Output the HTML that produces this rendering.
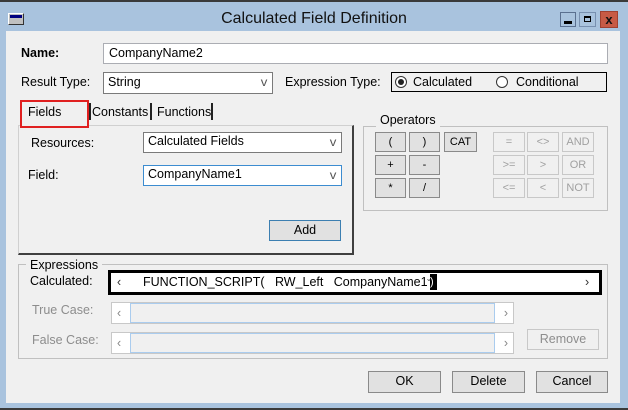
<!DOCTYPE html><html><head><style>
*{box-sizing:border-box;margin:0;padding:0}
body{width:628px;height:410px;background:#a9c3de;font-family:"Liberation Sans",sans-serif;font-size:12.5px;color:#000;position:relative;overflow:hidden}
.a{position:absolute}
.client{left:6px;top:31px;width:614px;height:372px;background:#f0f0f0}
.in{background:#fff;border:1px solid #abadb3}
.t{position:absolute;white-space:nowrap}
.btn{position:absolute;background:#e1e1e1;border:1px solid #adadad;text-align:center;line-height:18px}
.ob{position:absolute;background:#e1e1e1;border:1px solid #8a8a8a;text-align:center;line-height:18px;width:31px;height:20px;font-size:11px}
.od{position:absolute;border:1px solid #c8c8c8;text-align:center;line-height:18px;width:32px;height:20px;color:#a0a0a0;font-size:11px;background:#f0f0f0}
.chev{position:absolute;right:5px;top:2px;font-size:12px;color:#555;transform:scaleX(1.1)}
.grp{position:absolute;border:1px solid #c0c0c0}
.dis{color:#8d8d8d}
</style></head><body>
<div class="a" style="left:0;top:0;width:628px;height:2px;background:#3a3a3a"></div>
<div class="a" style="left:0;bottom:0;width:628px;height:2px;background:#3a3a3a"></div>
<div class="a" style="left:8px;top:13px;width:16px;height:12px;background:#c0c0c0;border:1px solid #fff;border-right-color:#333;border-bottom-color:#333"><div style="margin:1px;height:3px;background:#000080"></div></div>
<div class="t" style="left:0;width:628px;top:10px;text-align:center;font-size:16px;color:#111">Calculated Field Definition</div>
<div class="a" style="left:560px;top:12px;width:16px;height:15px;border:1px solid #5a7090;background:#a9c3de"><div style="position:absolute;left:3px;top:8px;width:8px;height:3px;background:#000"></div></div>
<div class="a" style="left:579px;top:12px;width:17px;height:15px;border:1px solid #7890b0;background:#a9c3de"><div style="position:absolute;left:4px;top:3px;width:7px;height:6px;border:1px solid #000;border-top-width:2px"></div></div>
<div class="a" style="left:600px;top:11px;width:18px;height:17px;background:#c75a45;border:1px solid #a04030;color:#111;font-weight:bold;text-align:center;line-height:15px;font-size:13px">x</div>
<div class="a client"></div>

<div class="t" style="left:21px;top:46px;font-weight:bold">Name:</div>
<div class="a in" style="left:103px;top:43px;width:505px;height:21px"><span class="t" style="left:5px;top:2px">CompanyName2</span></div>
<div class="t" style="left:21px;top:75px">Result Type:</div>
<div class="a in" style="left:103px;top:72px;width:170px;height:22px;border-color:#7a7a7a"><span class="t" style="left:4px;top:2px">String</span><span class="chev">v</span></div>
<div class="t" style="left:285px;top:75px">Expression Type:</div>
<div class="a" style="left:391px;top:72px;width:216px;height:20px;border:1px solid #000"></div>
<div class="a" style="left:395px;top:76px;width:12px;height:12px;border-radius:50%;border:1px solid #333;background:#fff"><div style="margin:2px;width:6px;height:6px;border-radius:50%;background:#222"></div></div>
<div class="t" style="left:413px;top:75px">Calculated</div>
<div class="a" style="left:496px;top:76px;width:12px;height:12px;border-radius:50%;border:1px solid #333;background:#fff"></div>
<div class="t" style="left:516px;top:75px">Conditional</div>

<div class="a" style="left:18px;top:125px;width:336px;height:130px;border:1px solid #d0d0d0;border-right:2px solid #404040;border-bottom:2px solid #404040"></div>
<div class="a" style="left:20px;top:100px;width:69px;height:28px;border:2px solid #e02020;background:#f0f0f0"></div>
<div class="t" style="left:28px;top:105px">Fields</div>
<div class="a" style="left:89px;top:103px;width:2px;height:17px;background:#222"></div>
<div class="t" style="left:92px;top:105px">Constants</div>
<div class="a" style="left:150px;top:103px;width:2px;height:17px;background:#222"></div>
<div class="t" style="left:157px;top:105px">Functions</div>
<div class="a" style="left:211px;top:103px;width:2px;height:17px;background:#222"></div>

<div class="t" style="left:31px;top:136px">Resources:</div>
<div class="a in" style="left:143px;top:132px;width:199px;height:21px;border-color:#7a7a7a"><span class="t" style="left:4px;top:1px">Calculated Fields</span><span class="chev">v</span></div>
<div class="t" style="left:28px;top:168px">Field:</div>
<div class="a in" style="left:143px;top:165px;width:199px;height:21px;border-color:#3c8cd0"><span class="t" style="left:4px;top:1px">CompanyName1</span><span class="chev">v</span></div>
<div class="btn" style="left:269px;top:220px;width:72px;height:21px;border-color:#3c7fb1">Add</div>

<div class="grp" style="left:363px;top:126px;width:245px;height:85px"></div>
<div class="t" style="left:376px;top:113px;background:#f0f0f0;padding:0 4px">Operators</div>
<div class="ob" style="left:375px;top:132px">(</div>
<div class="ob" style="left:409px;top:132px">)</div>
<div class="ob" style="left:444px;top:132px;width:33px">CAT</div>
<div class="ob" style="left:375px;top:155px">+</div>
<div class="ob" style="left:409px;top:155px">-</div>
<div class="ob" style="left:375px;top:178px">*</div>
<div class="ob" style="left:409px;top:178px">/</div>
<div class="od" style="left:493px;top:132px">=</div>
<div class="od" style="left:527px;top:132px">&lt;&gt;</div>
<div class="od" style="left:562px;top:132px">AND</div>
<div class="od" style="left:493px;top:155px">&gt;=</div>
<div class="od" style="left:527px;top:155px">&gt;</div>
<div class="od" style="left:562px;top:155px">OR</div>
<div class="od" style="left:493px;top:178px">&lt;=</div>
<div class="od" style="left:527px;top:178px">&lt;</div>
<div class="od" style="left:562px;top:178px">NOT</div>

<div class="grp" style="left:18px;top:264px;width:590px;height:95px"></div>
<div class="t" style="left:26px;top:258px;background:#f0f0f0;padding:0 4px">Expressions</div>
<div class="t" style="left:30px;top:274px">Calculated:</div>
<div class="a" style="left:108px;top:270px;width:494px;height:25px;border:3px solid #000;background:#fff"></div>
<div class="t" style="left:117px;top:275px;color:#333">&lsaquo;</div>
<div class="t" style="left:143px;top:275px">FUNCTION_SCRIPT(&nbsp;&nbsp; RW_Left&nbsp;&nbsp; CompanyName1<span style="font-size:9px">&#728;</span></div>
<div class="a" style="left:430px;top:274px;width:7px;height:16px;background:#000;color:#fff;font-size:11px;line-height:16px">)</div>
<div class="t" style="left:585px;top:275px;color:#333">&rsaquo;</div>

<div class="t dis" style="left:32px;top:303px">True Case:</div>
<div class="a in" style="left:111px;top:302px;width:403px;height:22px;border-color:#c8c8c8"><div class="a" style="left:18px;top:0;width:365px;height:20px;background:#f0f0f0;border:1px solid #aaccee"></div><span class="t" style="left:5px;top:3px;color:#888">&lsaquo;</span><span class="t" style="right:5px;top:3px;color:#888">&rsaquo;</span></div>
<div class="t dis" style="left:32px;top:333px">False Case:</div>
<div class="a in" style="left:111px;top:332px;width:403px;height:22px;border-color:#c8c8c8"><div class="a" style="left:18px;top:0;width:365px;height:20px;background:#f0f0f0;border:1px solid #aaccee"></div><span class="t" style="left:5px;top:3px;color:#888">&lsaquo;</span><span class="t" style="right:5px;top:3px;color:#888">&rsaquo;</span></div>
<div class="btn" style="left:527px;top:329px;width:72px;height:21px;background:#f0f0f0;border-color:#c8c8c8;color:#8d8d8d">Remove</div>

<div class="btn" style="left:368px;top:371px;width:73px;height:22px;border-color:#8a8a8a">OK</div>
<div class="btn" style="left:452px;top:371px;width:73px;height:22px;border-color:#8a8a8a">Delete</div>
<div class="btn" style="left:536px;top:371px;width:72px;height:22px;border-color:#8a8a8a">Cancel</div>
</body></html>
